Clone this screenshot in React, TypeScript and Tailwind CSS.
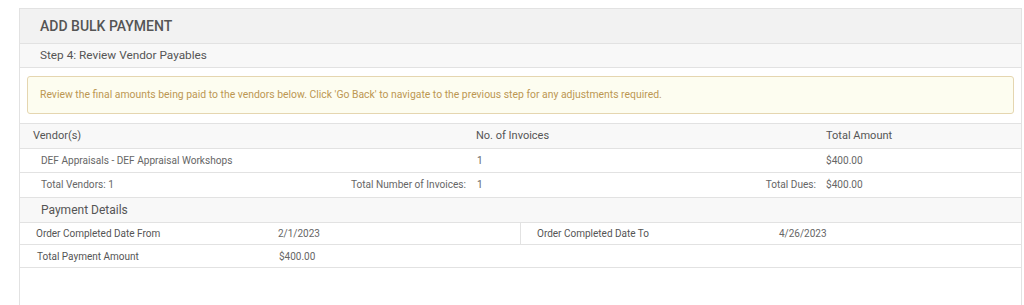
const font = { fontFamily: "Roboto, 'Liberation Sans', sans-serif" };

function Cell({ className = "", children }: { className?: string; children?: React.ReactNode }) {
  return <div className={`flex items-center ${className}`}>{children}</div>;
}

export default function App() {
  return (
    <div className="h-[305px] overflow-hidden bg-white pl-[19px] pt-[8px]" style={font}>
      <div className="h-[310px] w-[1003px] border border-[#e2e2e2] bg-white">
        {/* titulo */}
        <div className="flex h-[35px] items-center border-b border-[#e2e2e2] bg-[#f2f2f2] px-[20px] text-[14px] font-medium text-[#555]">
          ADD BULK PAYMENT
        </div>
        <div className="flex h-[24px] items-center border-b border-[#e2e2e2] bg-[#f8f8f8] px-[20px] text-[11.8px] text-[#555]">
          Step 4: Review Vendor Payables
        </div>

        {/* aviso */}
        <div className="pl-[7px] pr-[7px] pt-[8px]">
          <div className="flex h-[38px] items-center rounded-[3px] border border-[#e5d6b0] bg-[#fdfdf0] px-[12px] text-[10.4px] text-[#bc9752]">
            Review the final amounts being paid to the vendors below. Click 'Go Back' to navigate to the previous step for any adjustments required.
          </div>
        </div>

        {/* proveedores */}
        <div className="mt-[9px] border-t border-[#e2e2e2] text-[#666]">
          <div className="flex h-[25px] border-b border-[#e2e2e2] bg-[#f8f8f8] text-[11px] text-[#555]">
            <Cell className="w-[443px] pl-[13px]">Vendor(s)</Cell>
            <Cell className="w-[350px] pl-[13px]">No. of Invoices</Cell>
            <Cell className="flex-1 pl-[13px]">Total Amount</Cell>
          </div>
          <div className="flex h-[24px] border-b border-[#e2e2e2] text-[10.1px]">
            <Cell className="w-[443px] pl-[21px]">DEF Appraisals - DEF Appraisal Workshops</Cell>
            <Cell className="w-[350px] pl-[14px]">1</Cell>
            <Cell className="flex-1 pl-[13px]">$400.00</Cell>
          </div>
          <div className="flex h-[25px] border-b border-[#e2e2e2] text-[10.1px]">
            <Cell className="w-[443px] justify-between pl-[21px] pr-0">
              <span>Total Vendors: 1</span>
              <span className="-mr-[3px]">Total Number of Invoices:</span>
            </Cell>
            <Cell className="w-[350px] justify-between pl-[14px]">
              <span>1</span>
              <span className="-mr-[3px]">Total Dues:</span>
            </Cell>
            <Cell className="flex-1 pl-[13px]">$400.00</Cell>
          </div>

          {/* detalles del pago */}
          <div className="flex h-[25px] items-center border-b border-[#e2e2e2] bg-[#f8f8f8] pl-[21px] text-[12px] text-[#555]">
            Payment Details
          </div>
          <div className="flex h-[22px] border-b border-[#e2e2e2] text-[10px] text-[#555]">
            <Cell className="w-[500px] pl-[16px]">
              <span className="w-[242px]">Order Completed Date From</span>
              <span className="text-[#666]">2/1/2023</span>
            </Cell>
            <Cell className="flex-1 border-l border-[#e2e2e2] pl-[16px]">
              <span className="w-[242px]">Order Completed Date To</span>
              <span className="text-[#666]">4/26/2023</span>
            </Cell>
          </div>
          <div className="flex h-[23px] border-b border-[#e2e2e2] text-[10px] text-[#555]">
            <Cell className="w-[500px] pl-[17px]">
              <span className="w-[242px]">Total Payment Amount</span>
              <span className="text-[#666]">$400.00</span>
            </Cell>
          </div>
        </div>
      </div>
    </div>
  );
}
